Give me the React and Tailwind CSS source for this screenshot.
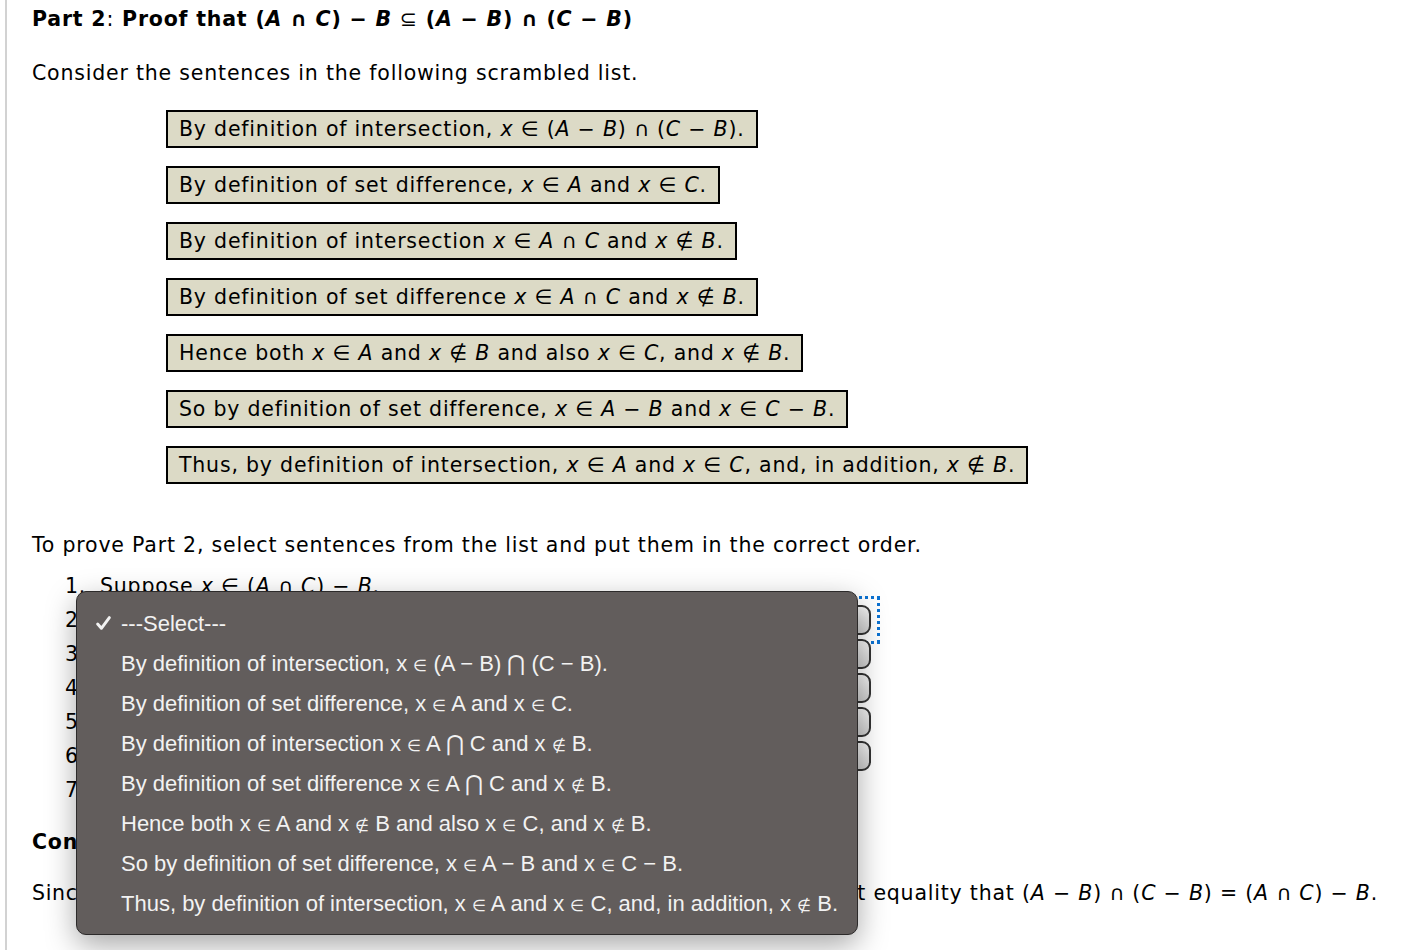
import React from "react";

const V = ({ children }) => <i>{children}</i>;

const sentences = [
  <>By definition of intersection, <V>x</V> ∈ (<V>A</V> − <V>B</V>) ∩ (<V>C</V> − <V>B</V>).</>,
  <>By definition of set difference, <V>x</V> ∈ <V>A</V> and <V>x</V> ∈ <V>C</V>.</>,
  <>By definition of intersection <V>x</V> ∈ <V>A</V> ∩ <V>C</V> and <V>x</V> ∉ <V>B</V>.</>,
  <>By definition of set difference <V>x</V> ∈ <V>A</V> ∩ <V>C</V> and <V>x</V> ∉ <V>B</V>.</>,
  <>Hence both <V>x</V> ∈ <V>A</V> and <V>x</V> ∉ <V>B</V> and also <V>x</V> ∈ <V>C</V>, and <V>x</V> ∉ <V>B</V>.</>,
  <>So by definition of set difference, <V>x</V> ∈ <V>A</V> − <V>B</V> and <V>x</V> ∈ <V>C</V> − <V>B</V>.</>,
  <>Thus, by definition of intersection, <V>x</V> ∈ <V>A</V> and <V>x</V> ∈ <V>C</V>, and, in addition, <V>x</V> ∉ <V>B</V>.</>,
];

const S = ({ children }) => <span className="text-[16px]">{children}</span>;

const options = [
  <>By definition of intersection, x <S>∈</S> (A − B) ⋂ (C − B).</>,
  <>By definition of set difference, x <S>∈</S> A and x <S>∈</S> C.</>,
  <>By definition of intersection x <S>∈</S> A ⋂ C and x <S>∉</S> B.</>,
  <>By definition of set difference x <S>∈</S> A ⋂ C and x <S>∉</S> B.</>,
  <>Hence both x <S>∈</S> A and x <S>∉</S> B and also x <S>∈</S> C, and x <S>∉</S> B.</>,
  <>So by definition of set difference, x <S>∈</S> A − B and x <S>∈</S> C − B.</>,
  <>Thus, by definition of intersection, x <S>∈</S> A and x <S>∈</S> C, and, in addition, x <S>∉</S> B.</>,
];

function SelectBox({ focused, short }) {
  return (
    <div className="relative">
      {focused && <div className="absolute -inset-[9px] border-[3px] border-dotted border-[#0b72d2]" />}
      <div
        className={
          "relative h-[30px] rounded-[9px] border-2 border-[#333] bg-gradient-to-b from-[#f4f4f4] to-[#cfcfcf] " +
          (short ? "w-[700px]" : "w-[771px]")
        }
      />
    </div>
  );
}

export default function App() {
  return (
    <div className="relative min-h-screen bg-white text-black" style={{ fontFamily: '"DejaVu Sans", Verdana, sans-serif' }}>
      <div className="ml-[5px] min-h-screen border-l-2 border-[#d2d2d2] pl-[25px] pt-[5px] text-[20.5px] leading-[28px] tracking-[0.8px]">
        <h1 className="font-bold">
          Part 2<span className="font-normal">:</span> Proof that (<V>A</V> ∩ <V>C</V>) − <V>B</V>{" "}
          <span className="font-normal">⊆</span> (<V>A</V> − <V>B</V>) ∩ (<V>C</V> − <V>B</V>)
        </h1>

        <p className="mt-[26px]">Consider the sentences in the following scrambled list.</p>

        <div className="ml-[134px] mt-[23px] flex flex-col items-start gap-[18px]">
          {sentences.map((s, i) => (
            <div key={i} className="flex h-[38px] items-center border-2 border-black bg-[#dcdac6] px-[11px]">
              <span className="whitespace-nowrap">{s}</span>
            </div>
          ))}
        </div>

        <p className="mt-[47px]">To prove Part 2, select sentences from the list and put them in the correct order.</p>

        <ol className="mt-[10px] pl-[33px]">
          <li className="flex h-[34px] items-center">
            <span className="w-[35px]">1.</span>
            <span>
              Suppose <V>x</V> ∈ (<V>A</V> ∩ <V>C</V>) − <V>B</V>.
            </span>
          </li>
          {[2, 3, 4, 5, 6, 7].map((n) => (
            <li key={n} className="flex h-[34px] items-center">
              <span className="w-[35px]">{n}.</span>
              <SelectBox focused={n === 2} short={n === 7} />
            </li>
          ))}
        </ol>

        <p className="mt-[21px] font-bold">Conclusion:</p>
        <p className="mt-[23px] whitespace-nowrap">
          <span className="tracking-[0.66px]">Since both Part 1 and Part 2 have been proved, it follows by definition of se</span>t equality that (<V>A</V> − <V>B</V>) ∩ (<V>C</V> − <V>B</V>) = (<V>A</V> ∩ <V>C</V>) − <V>B</V>.
        </p>
      </div>

      <div
        className="absolute left-[76px] top-[591px] w-[782px] rounded-[10px] border border-[#2c2a2a] bg-[#625d5c] py-[11px] text-[22px] text-[#f2f2f2] shadow-[0_10px_30px_rgba(0,0,0,0.35)]"
        style={{ fontFamily: '"Liberation Sans", Arial, sans-serif' }}
      >
        <div className="flex h-10 items-center">
          <span className="flex w-[44px] justify-end pr-[9px]">
            <svg width="17" height="17" viewBox="0 0 16 16" fill="none">
              <path d="M2.5 8.5 L6 12.5 L13.5 2.5" stroke="#f2f2f2" strokeWidth="2.8" strokeLinecap="round" strokeLinejoin="round" />
            </svg>
          </span>
          <span>---Select---</span>
        </div>
        {options.map((o, i) => (
          <div key={i} className="flex h-10 items-center pl-[44px]">
            <span className="whitespace-nowrap">{o}</span>
          </div>
        ))}
      </div>
    </div>
  );
}
